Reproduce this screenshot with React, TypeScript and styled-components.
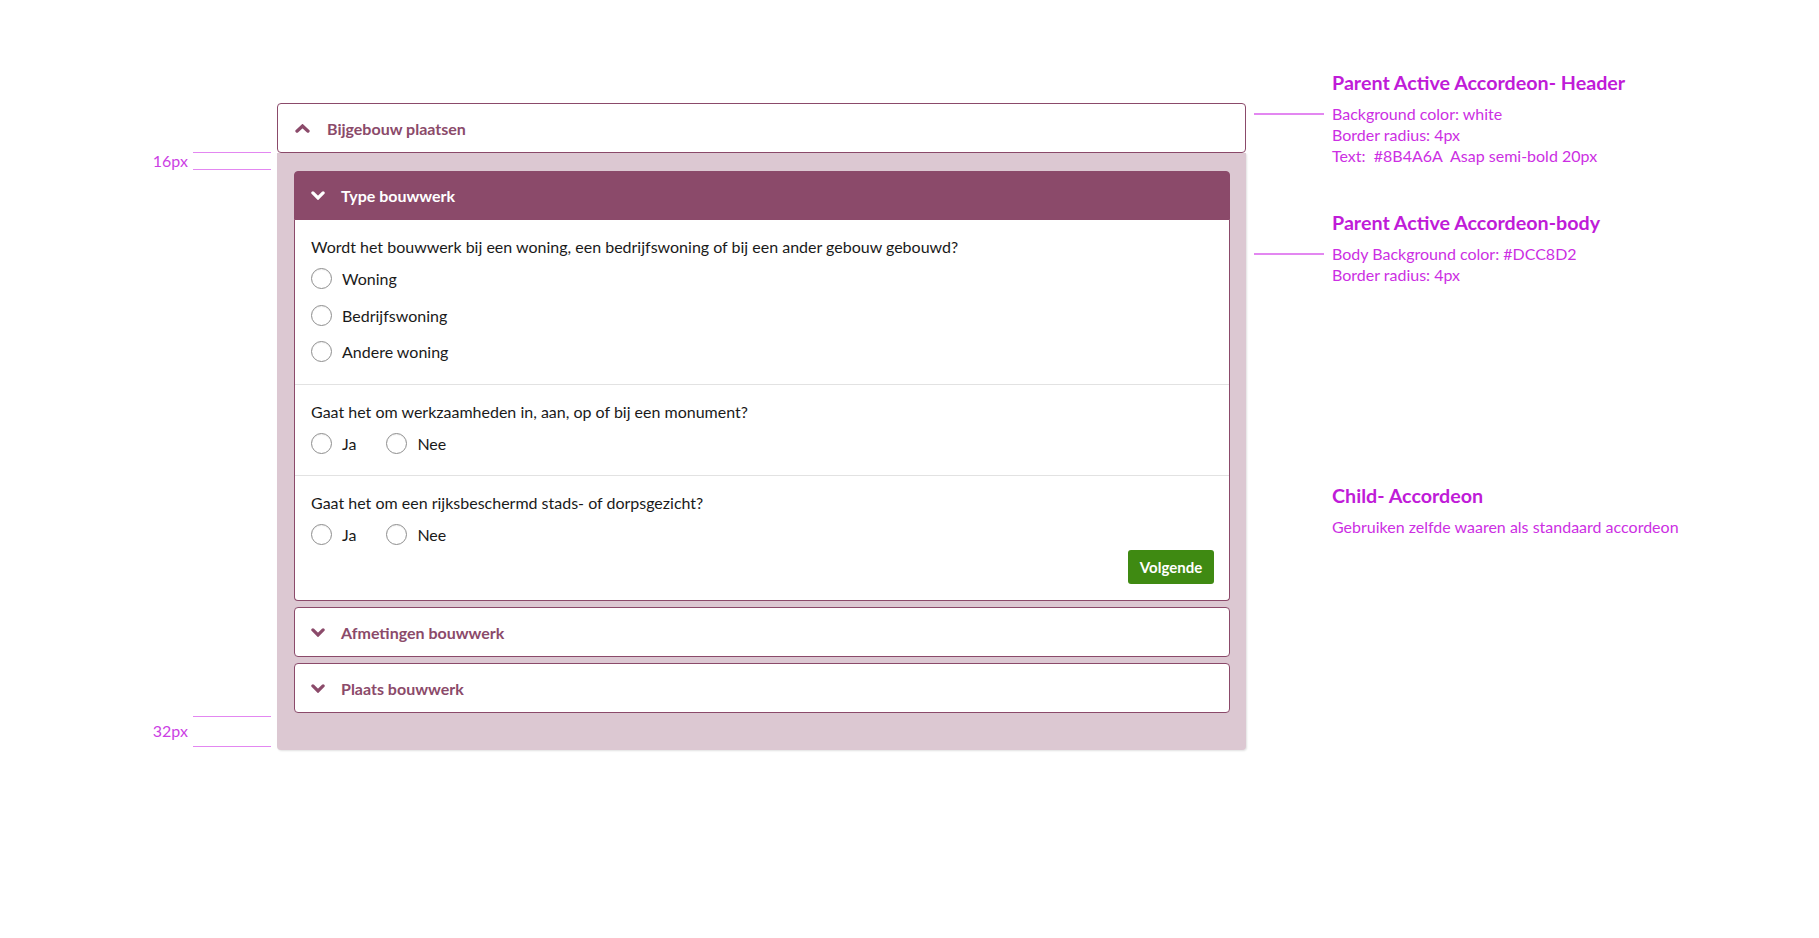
import React from "react";
import styled, { createGlobalStyle } from "styled-components";

const GlobalStyle = createGlobalStyle`
   html, body {
      margin: 0;
      padding: 0;
      background: #ffffff;
   }
   body {
      font-family: Lato, "Noto Sans", sans-serif;
      color: #1a1a1a;
   }
`;

const Page = styled.div`
   display: flex;
   flex-direction: row;
   align-items: flex-start;
   width: 1819px;
   min-height: 938px;
`;

/* left gutter with the spacing markers */
const Gutter = styled.div`
   width: 271px;
   display: flex;
   flex-direction: column;
   align-items: flex-end;
   padding-top: 152px;
`;

const Marker = styled.div<{ $gap: number; $top?: number }>`
   display: flex;
   flex-direction: row;
   align-items: center;
   gap: 5px;
   margin-top: ${(p) => p.$top ?? 0}px;

   span {
      font-size: 16px;
      color: #cc3fe4;
      margin-top: -2px;
   }

   div {
      width: 78px;
      height: ${(p) => p.$gap}px;
      border-top: 1.5px solid #e387f1;
      border-bottom: 1.5px solid #e387f1;
   }
`;

/* accordion */
const Accordion = styled.div`
   width: 969px;
   margin-top: 103px;
   margin-left: 6px;
`;

const ParentHeader = styled.div`
   box-sizing: border-box;
   height: 50px;
   display: flex;
   align-items: center;
   gap: 17px;
   padding: 0 17px;
   background: #ffffff;
   border: 1px solid #8b4a6a;
   border-radius: 4px;
   color: #8b4a6a;
   font-size: 16px;
   font-weight: 700;
`;

const ParentBody = styled.div`
   display: flex;
   flex-direction: column;
   gap: 6px;
   padding: 18px 16px 37px 17px;
   background: #dcc8d2;
   border-radius: 0 0 4px 4px;
   box-shadow: 1px 1px 2px rgba(0, 0, 0, 0.12);
`;

const ChildHeader = styled.div<{ $open?: boolean }>`
   box-sizing: border-box;
   height: ${(p) => (p.$open ? "49px" : "50px")};
   display: flex;
   align-items: center;
   gap: 16px;
   padding: 0 16px;
   background: ${(p) => (p.$open ? "#8b4a6a" : "#ffffff")};
   border: 1px solid #8b4a6a;
   border-radius: ${(p) => (p.$open ? "4px 4px 0 0" : "4px")};
   color: ${(p) => (p.$open ? "#ffffff" : "#8b4a6a")};
   font-size: 16px;
   font-weight: 700;
`;

const ChildBody = styled.div`
   background: #ffffff;
   border: 1px solid #8b4a6a;
   border-top: none;
   border-radius: 0 0 4px 4px;
`;

const Section = styled.div`
   display: flex;
   flex-direction: column;
   padding: 17px 15px 21px 16px;
   border-bottom: 1px solid #e2e2e2;

   &:last-child {
      border-bottom: none;
      padding-bottom: 16px;
   }
`;

const Question = styled.p`
   margin: 0 0 10.5px;
   font-size: 16px;
   line-height: 20px;
   color: #1a1a1a;
`;

const Options = styled.div<{ $inline?: boolean }>`
   display: flex;
   flex-direction: ${(p) => (p.$inline ? "row" : "column")};
   gap: ${(p) => (p.$inline ? "30px" : "14.5px")};
`;

const Option = styled.label`
   display: flex;
   align-items: center;
   gap: 10px;
   height: 22px;
   font-size: 16px;
   color: #1a1a1a;
`;

const Radio = styled.span`
   box-sizing: border-box;
   width: 21px;
   height: 21px;
   border-radius: 50%;
   border: 1px solid #8e8e8e;
   background: #ffffff;
   box-shadow: inset 0 1px 1px rgba(0, 0, 0, 0.06);
`;

const Actions = styled.div`
   display: flex;
   justify-content: flex-end;
   margin-top: 4.5px;
`;

const NextButton = styled.button`
   width: 86px;
   height: 34px;
   border: none;
   border-radius: 3px;
   background: #3f8a12;
   color: #ffffff;
   font-family: Lato, sans-serif;
   font-size: 15px;
   font-weight: 700;
   cursor: pointer;
`;

/* right hand notes */
const Notes = styled.div`
   display: flex;
   flex-direction: column;
   margin-left: 8px;
   margin-top: 71px;
   color: #cc2fe3;
`;

const NoteBlock = styled.div<{ $top?: number }>`
   display: flex;
   flex-direction: column;
   gap: 8px;
   margin-top: ${(p) => p.$top ?? 0}px;
`;

const NoteTitle = styled.h3`
   margin: 0;
   padding-left: 78px;
   font-size: 19.7px;
   line-height: 24px;
   font-weight: 700;
   color: #c01bd8;
`;

const NoteRow = styled.div`
   display: flex;
   align-items: flex-start;
   gap: 8px;
`;

const Connector = styled.span<{ $hidden?: boolean }>`
   width: 70px;
   height: 1.5px;
   margin-top: 10px;
   background: ${(p) => (p.$hidden ? "transparent" : "#e387f1")};
`;

const NoteText = styled.div`
   font-size: 16px;
   line-height: 21px;
   color: #cc2fe3;
`;

function Chevron({ up, color, size = 14 }: { up?: boolean; color: string; size?: number }) {
   return (
      <svg width={size} height={9} viewBox="0 0 14 9" preserveAspectRatio="none" style={{ transform: up ? "rotate(180deg)" : undefined }}>
         <path d="M1.9 1.9 L7 7 L12.1 1.9" fill="none" stroke={color} strokeWidth="3.2" strokeLinecap="round" />
      </svg>
   );
}

function RadioOption({ label }: { label: string }) {
   return (
      <Option>
         <Radio />
         {label}
      </Option>
   );
}

export default function App() {
   return (
      <Page>
         <GlobalStyle />
         <Gutter>
            <Marker $gap={16}>
               <span>16px</span>
               <div />
            </Marker>
            <Marker $gap={29} $top={546}>
               <span>32px</span>
               <div />
            </Marker>
         </Gutter>

         <Accordion>
            <ParentHeader>
               <Chevron up size={15} color="#8b4a6a" />
               Bijgebouw plaatsen
            </ParentHeader>
            <ParentBody>
               <div>
                  <ChildHeader $open>
                     <Chevron color="#ffffff" />
                     Type bouwwerk
                  </ChildHeader>
                  <ChildBody>
                     <Section>
                        <Question>Wordt het bouwwerk bij een woning, een bedrijfswoning of bij een ander gebouw gebouwd?</Question>
                        <Options>
                           <RadioOption label="Woning" />
                           <RadioOption label="Bedrijfswoning" />
                           <RadioOption label="Andere woning" />
                        </Options>
                     </Section>
                     <Section>
                        <Question>Gaat het om werkzaamheden in, aan, op of bij een monument?</Question>
                        <Options $inline>
                           <RadioOption label="Ja" />
                           <RadioOption label="Nee" />
                        </Options>
                     </Section>
                     <Section>
                        <Question>Gaat het om een rijksbeschermd stads- of dorpsgezicht?</Question>
                        <Options $inline>
                           <RadioOption label="Ja" />
                           <RadioOption label="Nee" />
                        </Options>
                        <Actions>
                           <NextButton>Volgende</NextButton>
                        </Actions>
                     </Section>
                  </ChildBody>
               </div>
               <ChildHeader>
                  <Chevron color="#8b4a6a" />
                  Afmetingen bouwwerk
               </ChildHeader>
               <ChildHeader>
                  <Chevron color="#8b4a6a" />
                  Plaats bouwwerk
               </ChildHeader>
            </ParentBody>
         </Accordion>

         <Notes>
            <NoteBlock>
               <NoteTitle>Parent Active Accordeon- Header</NoteTitle>
               <NoteRow>
                  <Connector />
                  <NoteText>
                     Background color: white
                     <br />
                     Border radius: 4px
                     <br />
                     Text:&nbsp; #8B4A6A&nbsp; Asap semi-bold 20px
                  </NoteText>
               </NoteRow>
            </NoteBlock>
            <NoteBlock $top={45}>
               <NoteTitle>Parent Active Accordeon-body</NoteTitle>
               <NoteRow>
                  <Connector />
                  <NoteText>
                     Body Background color: #DCC8D2
                     <br />
                     Border radius: 4px
                  </NoteText>
               </NoteRow>
            </NoteBlock>
            <NoteBlock $top={199}>
               <NoteTitle>Child- Accordeon</NoteTitle>
               <NoteRow>
                  <Connector $hidden />
                  <NoteText>Gebruiken zelfde waaren als standaard accordeon</NoteText>
               </NoteRow>
            </NoteBlock>
         </Notes>
      </Page>
   );
}
